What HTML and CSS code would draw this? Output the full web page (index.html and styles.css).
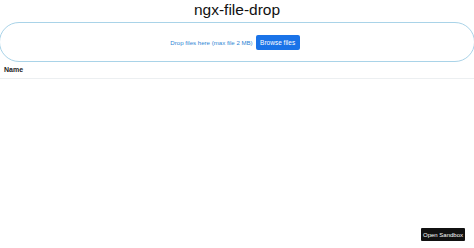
FILE: index.html
```html
<!DOCTYPE html>
<html>
<head>
<meta charset="utf-8">
<link rel="stylesheet" href="styles.css">
</head>
<body>
<div class="page">
  <h1 class="title">ngx-file-drop</h1>
  <div class="drop-zone">
    <span class="drop-text">Drop files here (max file 2 MB)</span>
    <button class="browse">Browse files</button>
  </div>
  <div class="table-head">Name</div>
</div>
<button class="sandbox">Open Sandbox</button>
</body>
</html>
```
FILE: styles.css
```css
html, body {
  margin: 0;
  padding: 0;
  background: #fff;
  font-family: "Liberation Sans", Arial, sans-serif;
}
.page {
  display: flex;
  flex-direction: column;
}
.title {
  margin: 0;
  height: 22px;
  font-size: 15.5px;
  font-weight: 400;
  line-height: 20px;
  text-align: center;
  color: #111;
}
.drop-zone {
  box-sizing: border-box;
  height: 40px;
  margin: 0 -1px;
  padding-right: 4px;
  border: 1px solid #a9d3e8;
  border-radius: 20px;
  display: flex;
  align-items: center;
  justify-content: center;
  gap: 3px;
}
.drop-text {
  font-size: 6.1px;
  color: #2f86d4;
}
.browse {
  height: 15px;
  width: 44px;
  padding: 0;
  border: none;
  border-radius: 2px;
  background: #1a73e8;
  color: #fff;
  font-family: inherit;
  font-size: 6.5px;
}
.table-head {
  padding: 4px 4px 0;
  height: 12px;
  font-size: 7px;
  font-weight: 700;
  color: #222;
  border-bottom: 1px solid #eceff1;
}
.sandbox {
  position: fixed;
  right: 9px;
  bottom: 7px;
  width: 44px;
  height: 13px;
  padding: 0;
  border: none;
  border-radius: 1px;
  background: #111;
  color: #fff;
  font-family: inherit;
  font-size: 6px;
}
```
